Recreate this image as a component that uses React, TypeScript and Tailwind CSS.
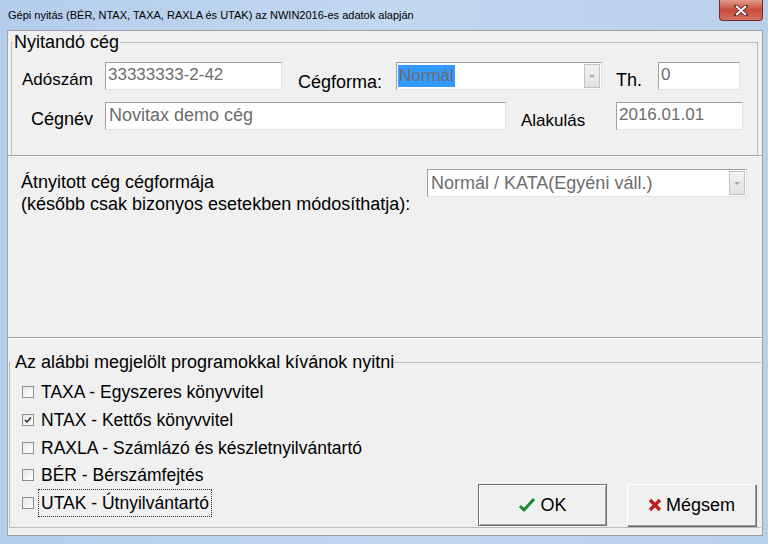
import { ReactNode } from 'react'

const sunken = 'bg-white border border-t-[#a0a0a0] border-l-[#a0a0a0] border-r-[#e3e3e3] border-b-[#e3e3e3]'

function TextBox ({ value, className }: { value: string, className: string }) {
  return (
    <div className={`${sunken} ${className} h-[28px] pl-[2px] text-[17px] leading-[24px] text-[#6d6d6d] overflow-hidden whitespace-nowrap`}>
      {value}
    </div>
  )
}

function ComboBox ({ children, className }: { children: ReactNode, className: string }) {
  return (
    <div className={`${sunken} ${className} h-[28px] flex items-stretch p-[1px]`}>
      <div className="flex-1 flex items-center overflow-hidden whitespace-nowrap text-[17px] text-[#6d6d6d]">
        {children}
      </div>
      <div className="w-[16px] bg-gradient-to-b from-[#f4f4f4] to-[#e1e1e1] border border-[#c3c3c3] flex items-center justify-center">
        <div className="w-0 h-0 border-l-[3px] border-r-[3px] border-t-[3px] border-l-transparent border-r-transparent border-t-[#a8a8a8]" />
      </div>
    </div>
  )
}

function CheckRow ({ label, checked, focused }: { label: string, checked?: boolean, focused?: boolean }) {
  return (
    <div className="flex items-center h-[27.75px]">
      <div className="ml-[12px] w-[12px] h-[12px] border border-[#8e8f8f] bg-gradient-to-br from-[#e6e6e6] to-white flex items-center justify-center">
        {checked && (
          <svg width="8" height="8" viewBox="0 0 8 8">
            <path d="M1 4 L3 6 L7 1.5" fill="none" stroke="#222" strokeWidth="1.4" />
          </svg>
        )}
      </div>
      <span className={`ml-[5px] px-[2px] text-[17.5px] leading-[26px] text-black ${focused ? 'outline outline-1 outline-dotted outline-[#333]' : ''}`}>
        {label}
      </span>
    </div>
  )
}

function Button ({ children, primary }: { children: ReactNode, primary?: boolean }) {
  return (
    <div className={`w-[129px] h-[42px] flex items-center justify-center gap-[4px] text-[18px] text-black bg-[#f0f0f0] border ${primary ? 'border-[#707070] shadow-[inset_1px_1px_0_#ffffff,inset_-1px_-1px_0_#a0a0a0]' : 'border-t-white border-l-white border-r-[#a0a0a0] border-b-[#a0a0a0] shadow-[1px_1px_0_#696969]'}`}>
      {children}
    </div>
  )
}

export default function App () {
  return (
    <div className="w-[768px] h-[544px] flex flex-col bg-gradient-to-r from-[#b3cdeb] via-[#c2d7f0] to-[#b9d0ea] font-['Liberation_Sans',Arial,sans-serif] overflow-hidden">
      {/* title bar */}
      <div className="h-[30px] flex items-start justify-between pl-[8px] pr-[5px]">
        <span className="mt-[8px] text-[11px] leading-[14px] text-black">
          Gépi nyitás (BÉR, NTAX, TAXA, RAXLA és UTAK) az NWIN2016-es adatok alapján
        </span>
        <div className="w-[44px] h-[21px] rounded-b-[4px] border border-t-0 border-[#7a2a2a] bg-gradient-to-b from-[#e09c8f] via-[#c9493a] to-[#d1705f] flex items-center justify-center">
          <svg width="14" height="11" viewBox="0 0 14 11">
            <path d="M2 1 L12 10 M12 1 L2 10" stroke="#4d1d1d" strokeWidth="3.4" strokeLinecap="square" />
            <path d="M2 1 L12 10 M12 1 L2 10" stroke="#ffffff" strokeWidth="2" />
          </svg>
        </div>
      </div>

      {/* client */}
      <div className="ml-[7px] mr-[5px] mb-[8px] flex-1 flex flex-col bg-[#f0f0f0] border border-[#a0a0a0] text-black">
        {/* section 1 */}
        <div className="h-[125px] border-b border-[#a0a0a0] pl-[3px] pr-[4px]">
          <fieldset className="border border-[#bcbcbc] border-b-0 h-[126px] mt-[1px] pl-[1px]">
            <legend className="text-[18px] leading-[20px] px-[1px]">Nyitandó cég</legend>
            <div className="flex items-start h-[28px] mt-[10px]">
              <span className="w-[92px] pl-[9px] mt-[8px] text-[17px] leading-[20px]">Adószám</span>
              <TextBox value="33333333-2-42" className="w-[177px]" />
              <span className="w-[114px] pl-[16px] mt-[10px] text-[18px] leading-[20px]">Cégforma:</span>
              <ComboBox className="w-[206px]">
                <span className="bg-[#3399ff] text-[#6d6d6d] px-[1px] leading-[22px]">Normál</span>
              </ComboBox>
              <span className="w-[56px] pl-[14px] mt-[8px] text-[18px] leading-[20px]">Th.</span>
              <TextBox value="0" className="w-[82px]" />
            </div>
            <div className="flex items-start h-[28px] mt-[12px]">
              <span className="w-[92px] pl-[18px] mt-[7px] text-[18px] leading-[20px]">Cégnév</span>
              <TextBox value="Novitax demo cég" className="w-[401px] !pl-[3px] !text-[18px]" />
              <span className="w-[110px] pl-[15px] mt-[9px] text-[17px] leading-[20px]">Alakulás</span>
              <TextBox value="2016.01.01" className="w-[127px]" />
            </div>
          </fieldset>
        </div>

        {/* section 2 */}
        <div className="h-[182px] border-t border-white border-b border-b-[#a0a0a0] flex items-start pl-[13px] pt-[12px]">
          <div className="w-[406px] mt-[2px] text-[18px] leading-[22px]">
            <div>Átnyitott cég cégformája</div>
            <div>(később csak bizonyos esetekben módosíthatja):</div>
          </div>
          <ComboBox className="w-[320px]">
            <span className="pl-[2px] text-[18px]">Normál / KATA(Egyéni váll.)</span>
          </ComboBox>
        </div>

        {/* section 3 */}
        <div className="flex-1 border-t border-white flex flex-col pl-[1px] pr-[1px]">
          <fieldset className="border border-[#bcbcbc] border-r-0 mt-[13px]">
            <legend className="text-[18px] leading-[20px] pl-[5px]">Az alábbi megjelölt programokkal kívánok nyitni</legend>
            <div className="flex items-end w-full h-[155px]">
              <div className="flex flex-col pb-[10px]">
                <CheckRow label="TAXA - Egyszeres könyvvitel" />
                <CheckRow label="NTAX - Kettős könyvvitel" checked />
                <CheckRow label="RAXLA - Számlázó és készletnyilvántartó" />
                <CheckRow label="BÉR - Bérszámfejtés" />
                <CheckRow label="UTAK - Útnyilvántartó" focused />
              </div>
              <div className="ml-auto flex gap-[20px] pb-[1px] pr-[5px]">
                <Button primary>
                  <svg width="18" height="16" viewBox="0 0 18 16">
                    <path d="M2 9 L6 13 L16 2" fill="none" stroke="#1f8a2a" strokeWidth="3" strokeLinejoin="round" />
                  </svg>
                  <span>OK</span>
                </Button>
                <Button>
                  <svg width="14" height="14" viewBox="0 0 14 14">
                    <path d="M2 2 L12 12 M12 2 L2 12" stroke="#c0201f" strokeWidth="3.4" />
                  </svg>
                  <span>Mégsem</span>
                </Button>
              </div>
            </div>
          </fieldset>
        </div>
      </div>
    </div>
  )
}
